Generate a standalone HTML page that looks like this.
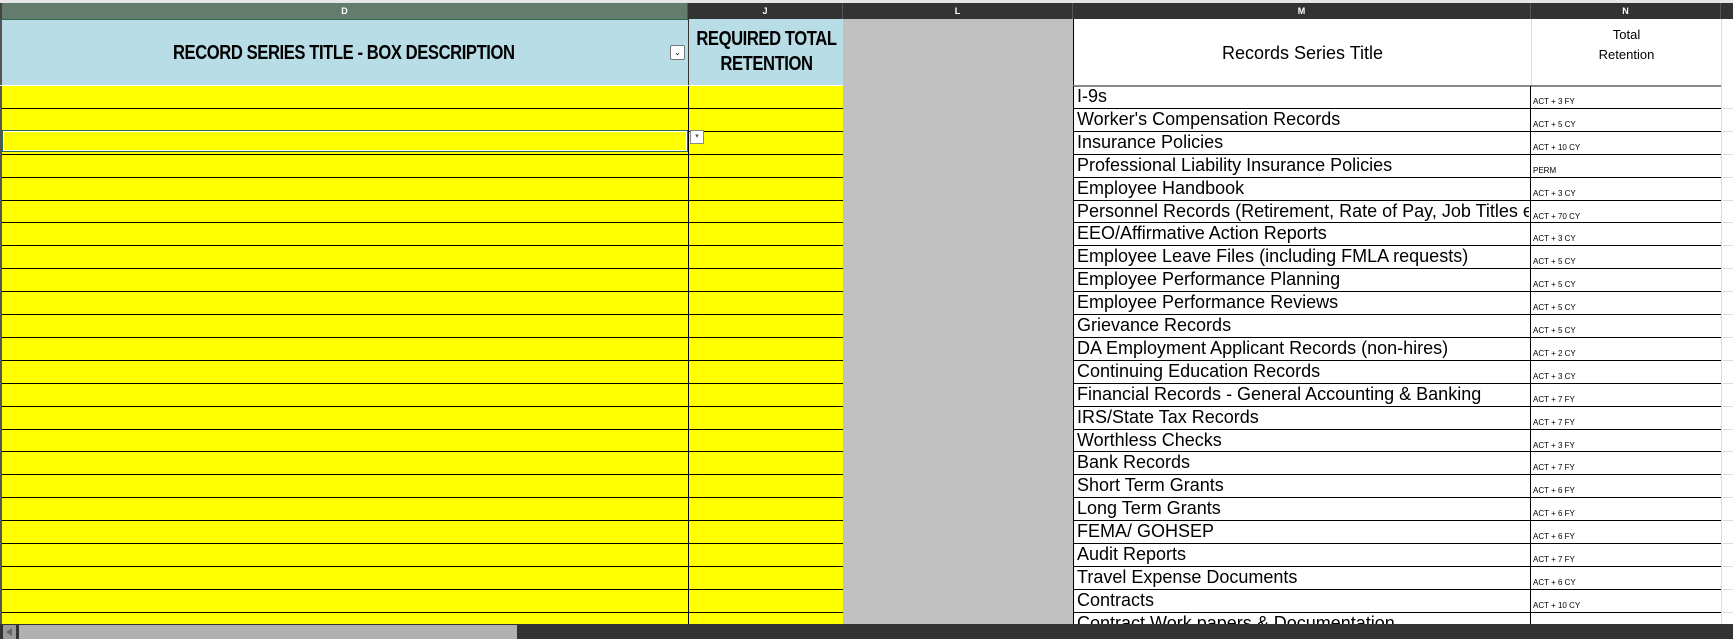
<!DOCTYPE html>
<html><head><meta charset="utf-8"><style>
*{margin:0;padding:0;box-sizing:border-box}
body{width:1733px;height:639px;overflow:hidden;background:#fff;position:relative;font-family:"Liberation Sans",Arial,sans-serif}
.a{position:absolute}
.ch{position:absolute;top:3px;height:16px;color:#fff;font-size:9px;font-weight:bold;text-align:center;line-height:16px;border-right:1px solid #555}
.m{position:absolute;left:1077px;font-size:18px;color:#000;white-space:nowrap;overflow:hidden;width:452px;line-height:20px}
.n{position:absolute;left:1533px;font-size:8px;color:#000;white-space:nowrap}
</style></head><body>
<div class="a" style="left:0;top:0;width:1733px;height:3px;background:#e6e6e6"></div>
<div class="ch" style="left:0;width:688px;background:#647c6e;border-left:2px solid #444">D</div>
<div class="ch" style="left:688px;width:155px;background:#333">J</div>
<div class="ch" style="left:843px;width:230px;background:#333">L</div>
<div class="ch" style="left:1073px;width:458px;background:#333">M</div>
<div class="ch" style="left:1531px;width:190px;background:#333">N</div>
<div class="ch" style="left:1721px;width:12px;background:#333;border:none"></div>
<div class="a" style="left:0;top:19px;width:688px;height:66px;background:#b8dde6;border-left:2px solid #555;border-top:1px solid #2a6e4a"></div>
<div class="a" style="left:0;top:19px;width:688px;height:68px;display:flex;align-items:center;justify-content:center;font-weight:bold;font-size:20px;letter-spacing:-0.5px"><span style="transform:scaleX(0.83);display:inline-block">RECORD SERIES TITLE - BOX DESCRIPTION</span></div>
<div class="a" style="left:670px;top:45px;width:15px;height:15px;background:#fff;border:1px solid #777;border-radius:2px;font-size:8px;text-align:center;line-height:13px">&#8964;</div>
<div class="a" style="left:688px;top:19px;width:155px;height:66px;background:#b8dde6;border-left:1px solid #333;display:flex;align-items:center;justify-content:center;text-align:center;font-weight:bold;font-size:20px;line-height:25px;letter-spacing:-0.5px"><span style="transform:scaleX(0.83);display:inline-block;white-space:nowrap">REQUIRED TOTAL<br>RETENTION</span></div>
<div class="a" style="left:843px;top:19px;width:230px;height:605px;background:#c0c0c0"></div>
<div class="a" style="left:1073px;top:19px;width:458px;height:66px;border-left:1px solid #000;display:flex;align-items:center;justify-content:center;font-size:18px;padding-top:3px">Records Series Title</div>
<div class="a" style="left:1531px;top:25px;width:190px;text-align:center;font-size:13px;line-height:20px;border-left:1px solid #ddd">Total<br>Retention</div>
<div class="a" style="left:1531px;top:19px;width:1px;height:66px;background:#ddd"></div>
<div class="a" style="left:1721px;top:19px;width:1px;height:605px;background:#ddd"></div>
<div class="a" style="left:1073px;top:85px;width:648px;height:2px;background:#888"></div>
<div class="a" style="left:0;top:86px;width:843px;height:538px;background:#ff0;border-left:2px solid #555"></div>
<div class="a" style="left:688px;top:86px;width:1px;height:538px;background:#000"></div>
<div class="a" style="left:1073px;top:86px;width:1px;height:538px;background:#000"></div>
<div class="a" style="left:1530px;top:86px;width:1px;height:538px;background:#000"></div>
<div id="rows"></div>
<div class="a" style="left:2px;top:130px;width:686px;height:22px;border:1px solid #2a6e4a;box-shadow:inset 0 0 0 1px #fff"></div>
<div class="a" style="left:690px;top:130px;width:14px;height:14px;background:#fff;border:1px solid #888;font-size:7px;text-align:center;line-height:12px;color:#555">&#9662;</div>
<div class="a" style="left:0;top:624px;width:1733px;height:15px;background:#333"></div>
<div class="a" style="left:3px;top:625px;width:13px;height:14px;background:#999"></div>
<div class="a" style="left:6px;top:628px;width:0;height:0;border-top:4px solid transparent;border-bottom:4px solid transparent;border-right:6px solid #666"></div>
<div class="a" style="left:19px;top:625px;width:498px;height:14px;background:#b0b0b0"></div>
<script>
var t=[["I-9s","ACT + 3 FY"],["Worker's Compensation Records","ACT + 5 CY"],["Insurance Policies","ACT + 10 CY"],["Professional Liability Insurance Policies","PERM"],["Employee Handbook","ACT + 3 CY"],["Personnel Records (Retirement, Rate of Pay, Job Titles etc.)","ACT + 70 CY"],["EEO/Affirmative Action Reports","ACT + 3 CY"],["Employee Leave Files (including FMLA requests)","ACT + 5 CY"],["Employee Performance Planning","ACT + 5 CY"],["Employee Performance Reviews","ACT + 5 CY"],["Grievance Records","ACT + 5 CY"],["DA Employment Applicant Records (non-hires)","ACT + 2 CY"],["Continuing Education Records","ACT + 3 CY"],["Financial Records - General Accounting & Banking","ACT + 7 FY"],["IRS/State Tax Records","ACT + 7 FY"],["Worthless Checks","ACT + 3 FY"],["Bank Records","ACT + 7 FY"],["Short Term Grants","ACT + 6 FY"],["Long Term Grants","ACT + 6 FY"],["FEMA/ GOHSEP","ACT + 6 FY"],["Audit Reports","ACT + 7 FY"],["Travel Expense Documents","ACT + 6 CY"],["Contracts","ACT + 10 CY"],["Contract Work papers & Documentation",""]];
var h="";
for(var i=0;i<t.length;i++){var y=85+i*22.9;
h+='<div class="m" style="top:'+(y+1)+'px">'+t[i][0]+'</div>';
h+='<div class="n" style="top:'+(y+12)+'px">'+t[i][1]+'</div>';
if(i<23){var ly=y+22.9;
h+='<div class="a" style="left:2px;top:'+ly+'px;width:841px;height:1px;background:#000"></div>';
h+='<div class="a" style="left:1073px;top:'+ly+'px;width:648px;height:1px;background:#000"></div>';
h+='<div class="a" style="left:1721px;top:'+ly+'px;width:12px;height:1px;background:#ddd"></div>';}}
document.getElementById("rows").innerHTML=h;
</script>
</body></html>
